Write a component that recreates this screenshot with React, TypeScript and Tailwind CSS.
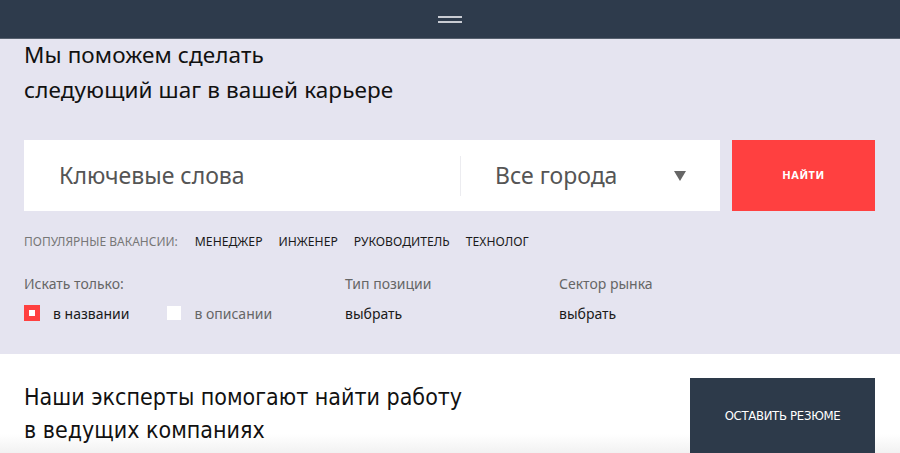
import React from "react";

const popular = ["МЕНЕДЖЕР", "ИНЖЕНЕР", "РУКОВОДИТЕЛЬ", "ТЕХНОЛОГ"];

function Header() {
  return (
    <header className="h-[39px] bg-[#2e3b4c] border-b border-[#56606e] flex items-center justify-center">
      <div className="flex flex-col gap-[3px] w-[24px]">
        <span className="block h-[2px] bg-[#c9ccd3]" />
        <span className="block h-[2px] bg-[#c9ccd3]" />
      </div>
    </header>
  );
}

function SearchForm() {
  return (
    <div className="flex mt-[33px] mr-[25px]">
      <div className="flex flex-1 h-[71px] bg-white items-center">
        <div className="w-[436px] pl-[35px] text-[23px] text-[#555]">Ключевые слова</div>
        <div className="w-px h-[40px] bg-[#ececf0]" />
        <div className="flex flex-1 items-center justify-between pl-[34px] pr-[34px] text-[23px] text-[#555]">
          <span>Все города</span>
          <svg width="12" height="10" viewBox="0 0 12 10">
            <path d="M0 0 H12 L6 10 Z" fill="#666" />
          </svg>
        </div>
      </div>
      <button className="w-[143px] h-[71px] ml-[12px] bg-[#ff4040] text-white text-[11px] font-bold tracking-[0.5px]">
        НАЙТИ
      </button>
    </div>
  );
}

function Popular() {
  return (
    <div className="flex items-center h-[20px] mt-[21px]">
      <span className="text-[#777] text-[12px] mr-[17px]">ПОПУЛЯРНЫЕ ВАКАНСИИ:</span>
      <div className="flex gap-[16px] text-[#1a1a1a] text-[12.2px]">
        {popular.map((p) => (
          <span key={p}>{p}</span>
        ))}
      </div>
    </div>
  );
}

function Filters() {
  return (
    <div className="flex mt-[21px] text-[14px]">
      <div className="w-[321px]">
        <div className="text-[#666]">Искать только:</div>
        <div className="flex items-center mt-[9px] h-[20px]">
          <span className="w-[16px] h-[16px] bg-[#ff4040] flex items-center justify-center">
            <span className="w-[6px] h-[6px] bg-white" />
          </span>
          <span className="ml-[13px] text-[#1a1a1a]">в названии</span>
          <span className="w-[14px] h-[14px] bg-white ml-[38px]" />
          <span className="ml-[13px] text-[#666]">в описании</span>
        </div>
      </div>
      <div className="w-[214px]">
        <div className="text-[#666]">Тип позиции</div>
        <div className="mt-[9px] h-[20px] flex items-center text-[#1a1a1a]">выбрать</div>
      </div>
      <div>
        <div className="text-[#666]">Сектор рынка</div>
        <div className="mt-[9px] h-[20px] flex items-center text-[#1a1a1a]">выбрать</div>
      </div>
    </div>
  );
}

export default function App() {
  return (
    <div className="w-[900px] h-[453px] overflow-hidden bg-white font-['Noto_Sans',sans-serif]">
      <Header />
      <section className="flex flex-col bg-[#e5e4f0] h-[315px] pl-[24px]">
        <h1 className="text-[22.5px] leading-[35px] text-[#111] font-normal tracking-[0.1px] -mt-[2px]">
          Мы поможем сделать
          <br />
          следующий шаг в вашей карьере
        </h1>
        <SearchForm />
        <Popular />
        <Filters />
      </section>
      <section className="flex justify-between pl-[24px] pr-[25px] pt-[24px] bg-gradient-to-b from-white from-80% to-[#f1f1f1]">
        <h2 className="text-[23px] leading-[33px] mt-[3px] text-[#111] font-['DejaVu_Sans_Condensed','Liberation_Sans_Narrow',sans-serif]">
          Наши эксперты помогают найти работу
          <br />
          в ведущих компаниях
        </h2>
        <button className="w-[185px] h-[76px] bg-[#2d3a4a] text-white text-[13px] font-['DejaVu_Sans_Condensed',sans-serif] tracking-[-0.3px]">
          ОСТАВИТЬ РЕЗЮМЕ
        </button>
      </section>
    </div>
  );
}
